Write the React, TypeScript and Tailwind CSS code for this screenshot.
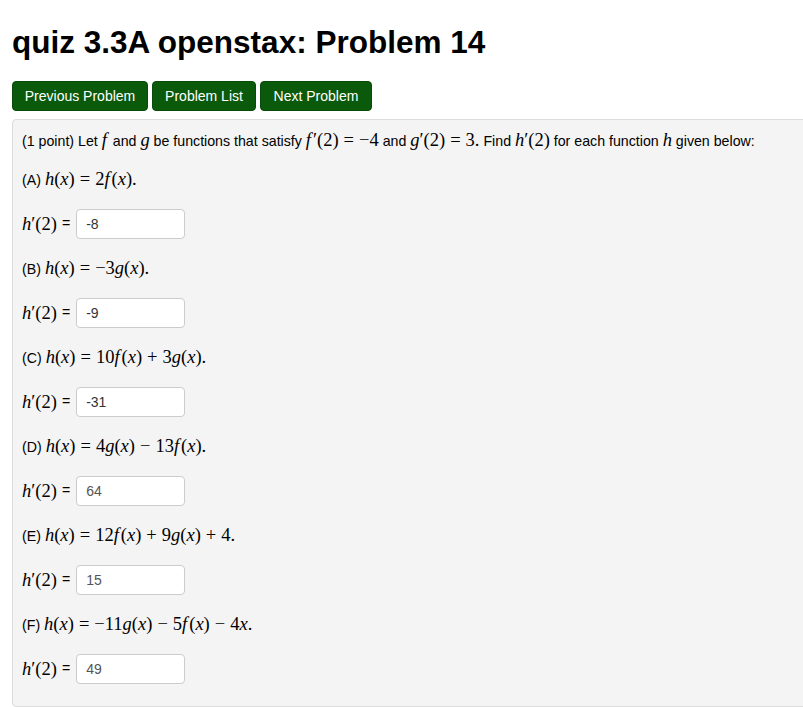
import React from "react";

const sans = "font-['Liberation_Sans',Arial,sans-serif]";
const serif = "font-['Liberation_Serif','Times_New_Roman',serif]";

function V({ children, f }: { children: React.ReactNode; f?: boolean }) {
  return <span className={f ? "italic mr-[2px]" : "italic"}>{children}</span>;
}

function M({ children }: { children: React.ReactNode }) {
  return (
    <span className={`${serif} text-[18.5px] leading-[20px] text-black whitespace-nowrap`}>{children}</span>
  );
}

function Op({ children }: { children: React.ReactNode }) {
  return <span className="mx-[5px]">{children}</span>;
}

function HPrime() {
  return (
    <M>
      <V>h</V>′(2)
    </M>
  );
}

interface Part {
  label: string;
  expr: React.ReactNode;
  answer: string;
  dark?: boolean;
}

const parts: Part[] = [
  {
    label: "(A)",
    expr: (
      <>
        <V>h</V>(<V>x</V>)<Op>=</Op>2<V f>f</V>(<V>x</V>).
      </>
    ),
    answer: "-8",
    dark: true,
  },
  {
    label: "(B)",
    expr: (
      <>
        <V>h</V>(<V>x</V>)<Op>=</Op>−3<V>g</V>(<V>x</V>).
      </>
    ),
    answer: "-9",
    dark: true,
  },
  {
    label: "(C)",
    expr: (
      <>
        <V>h</V>(<V>x</V>)<Op>=</Op>10<V f>f</V>(<V>x</V>)<Op>+</Op>3<V>g</V>(<V>x</V>).
      </>
    ),
    answer: "-31",
    dark: true,
  },
  {
    label: "(D)",
    expr: (
      <>
        <V>h</V>(<V>x</V>)<Op>=</Op>4<V>g</V>(<V>x</V>)<Op>−</Op>13<V f>f</V>(<V>x</V>).
      </>
    ),
    answer: "64",
  },
  {
    label: "(E)",
    expr: (
      <>
        <V>h</V>(<V>x</V>)<Op>=</Op>12<V f>f</V>(<V>x</V>)<Op>+</Op>9<V>g</V>(<V>x</V>)<Op>+</Op>4.
      </>
    ),
    answer: "15",
  },
  {
    label: "(F)",
    expr: (
      <>
        <V>h</V>(<V>x</V>)<Op>=</Op>−11<V>g</V>(<V>x</V>)<Op>−</Op>5<V f>f</V>(<V>x</V>)<Op>−</Op>4<V>x</V>.
      </>
    ),
    answer: "49",
  },
];

export default function App() {
  return (
    <div className={`${sans} w-[803px] h-[707px] overflow-hidden bg-white text-black`}>
      <div className="pl-[12px] pt-[24px]">
        <h1 className="text-[31.5px] leading-[36px] font-bold">quiz 3.3A openstax: Problem 14</h1>

        <div className="mt-[21px] flex gap-[4px]">
          {[
            ["Previous Problem", "w-[136px]"],
            ["Problem List", "w-[104px]"],
            ["Next Problem", "w-[112px]"],
          ].map(([t, w]) => (
            <button
              key={t}
              className={`${w} h-[30px] rounded-[4px] bg-[#0b5a0b] border border-[#084a08] text-white text-[14px] leading-none flex items-center justify-center`}
            >
              {t}
            </button>
          ))}
        </div>

        <div className="mt-[8px] w-[830px] h-[588px] rounded-[4px] border border-[#dcdcdc] bg-[#f4f4f4] pl-[9px] pt-[10px] text-[14.2px]">
          <p className="leading-[20px] whitespace-nowrap">
            (1 point) Let{" "}
            <M>
              <V f>f</V>
            </M>{" "}
            and{" "}
            <M>
              <V>g</V>
            </M>{" "}
            be functions that satisfy{" "}
            <M>
              <V f>f</V>′(2)<Op>=</Op>−4
            </M>{" "}
            and{" "}
            <M>
              <V>g</V>′(2)<Op>=</Op>3.
            </M>{" "}
            Find <HPrime /> for each function{" "}
            <M>
              <V>h</V>
            </M>{" "}
            given below:
          </p>

          <div className="mt-[18px] flex flex-col">
            {parts.map((p, i) => (
              <div key={p.label} className={i === 0 ? "" : "mt-[19px]"}>
                <p className="leading-[20px] whitespace-nowrap">
                  {p.label} <M>{p.expr}</M>
                </p>
                <div className="mt-[19px] flex items-center">
                  <HPrime />
                  <span className="ml-[5px] mr-[6px]">=</span>
                  <div
                    className={`w-[109px] h-[30px] rounded-[4px] border border-[#cccccc] bg-white flex items-center pl-[9px] text-[14px] ${
                      p.dark ? "text-[#333333]" : "text-[#555555]"
                    }`}
                  >
                    {p.answer}
                  </div>
                </div>
              </div>
            ))}
          </div>
        </div>
      </div>
    </div>
  );
}
